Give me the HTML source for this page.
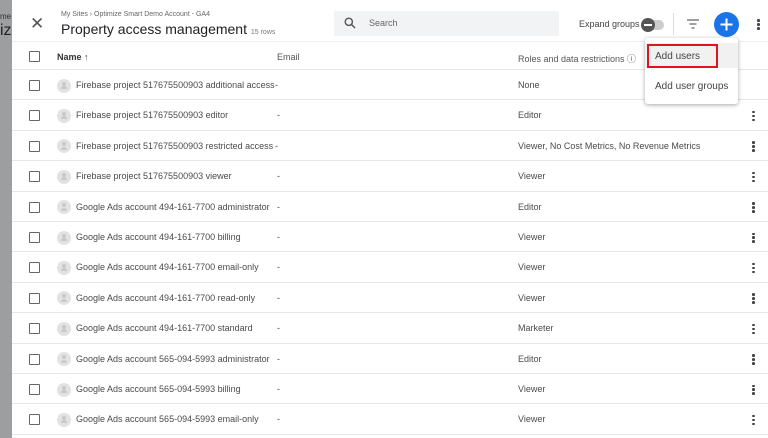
<!DOCTYPE html>
<html><head><style>
*{margin:0;padding:0;box-sizing:border-box}
body{width:768px;height:438px;overflow:hidden;background:#fff;font-family:"Liberation Sans",Arial,sans-serif;position:relative;color:#3c4043}
.strip{position:absolute;left:0;top:0;width:12px;height:438px;background:#9d9ea0}
.ab{position:absolute;white-space:nowrap}
.row{position:absolute;left:12px;width:756px;height:30.4px;border-bottom:1px solid #e6e6e6}
.cb{position:absolute;left:17px;width:11px;height:11px;border:1.6px solid #666;border-radius:1px}
.av{position:absolute;left:45px;width:14px;height:14px;border-radius:50%;background:#e2e2e2}
.av:after{content:"";position:absolute;left:4px;top:7.5px;width:6px;height:3px;border-radius:3px 3px 0 0;background:#c8c8c8}
.av:before{content:"";position:absolute;left:5px;top:3px;width:4px;height:4px;border-radius:50%;background:#c8c8c8}
.t{position:absolute;font-size:9px;color:#4a4a4a;white-space:nowrap}
.dots{position:absolute;left:740px;width:3px}
.dots i{display:block;width:2.6px;height:2.6px;background:#444;border-radius:50%;margin-bottom:1.4px}
</style></head><body>
<div class="strip"></div>
<div class="ab" style="left:0;top:12px;font-size:8px;color:#333">me</div>
<div class="ab" style="left:0;top:22px;font-size:16px;color:#222">iz</div>
<div class="ab" style="left:30px;top:14px;font-size:17px;color:#555">✕</div>
<div class="ab" style="left:61px;top:11px;font-size:7px;color:#666">My Sites › Optimize Smart Demo Account - GA4</div>
<div class="ab" style="left:61px;top:21px;font-size:14px;color:#202124">Property access management <span style="font-size:7px;color:#777">15 rows</span></div>
<div class="ab" style="left:334px;top:11px;width:225px;height:25px;background:#f1f3f4;border-radius:2px"></div>
<svg class="ab" style="left:344px;top:17px" width="12" height="12" viewBox="0 0 12 12"><circle cx="4.8" cy="4.8" r="3.6" fill="none" stroke="#555" stroke-width="1.4"/><path d="M7.5 7.5L11 11" stroke="#555" stroke-width="1.5"/></svg>
<div class="ab" style="left:369px;top:18px;font-size:9px;color:#666">Search</div>
<div class="ab" style="left:579px;top:19px;font-size:9px;color:#444">Expand groups</div>
<div class="ab" style="left:643px;top:20px;width:21px;height:10px;border-radius:5px;background:#ccc"></div>
<div class="ab" style="left:641px;top:18px;width:14px;height:14px;border-radius:50%;background:#555"><div style="position:absolute;left:3px;top:6px;width:8px;height:2px;background:#fff"></div></div>
<div class="ab" style="left:673px;top:13px;width:1px;height:22px;background:#ddd"></div>
<svg class="ab" style="left:687px;top:19px" width="12" height="10"><path d="M0 1h12M2.5 5h7M4.5 9h3" stroke="#666" stroke-width="1.3"/></svg>
<div class="ab" style="left:714px;top:12px;width:25px;height:25px;border-radius:50%;background:#1a73e8"><svg width="25" height="25"><path d="M12.5 6.5v12M6.5 12.5h12" stroke="#fff" stroke-width="2"/></svg></div>
<div class="dots" style="top:19px;left:757px"><i></i><i></i><i></i></div>
<div class="ab" style="left:12px;top:41px;width:756px;height:1px;background:#eee"></div>
<div class="row" style="top:42px;height:28px"></div>
<div class="cb" style="top:51px;left:29px"></div>
<div class="t" style="left:57px;top:52px;font-weight:bold;color:#333">Name ↑</div>
<div class="t" style="left:277px;top:52px;color:#555">Email</div>
<div class="t" style="left:518px;top:52px;color:#555">Roles and data restrictions ⓘ</div>
<div id="rows"></div>
<div class="ab" style="left:645px;top:38px;width:93px;height:66px;background:#fff;box-shadow:0 1px 4px rgba(0,0,0,.35);border-radius:3px">
<div style="position:absolute;left:0;top:5px;width:93px;height:25px;background:#f1f1f1"></div>
<div style="position:absolute;left:2px;top:6px;width:71px;height:24px;border:2px solid #e0141e"></div>
<div style="position:absolute;left:10px;top:13px;font-size:10px;color:#444">Add users</div>
<div style="position:absolute;left:10px;top:43px;font-size:10px;color:#444">Add user groups</div>
</div>
<script>
var d=[["Firebase project 517675500903 additional access","None"],["Firebase project 517675500903 editor","Editor"],["Firebase project 517675500903 restricted access","Viewer, No Cost Metrics, No Revenue Metrics"],["Firebase project 517675500903 viewer","Viewer"],["Google Ads account 494-161-7700 administrator","Editor"],["Google Ads account 494-161-7700 billing","Viewer"],["Google Ads account 494-161-7700 email-only","Viewer"],["Google Ads account 494-161-7700 read-only","Viewer"],["Google Ads account 494-161-7700 standard","Marketer"],["Google Ads account 565-094-5993 administrator","Editor"],["Google Ads account 565-094-5993 billing","Viewer"],["Google Ads account 565-094-5993 email-only","Viewer"]];
var h="";d.forEach(function(r,i){var t=70+i*30.4;var c=t+15.5;
h+='<div class="row" style="top:'+t+'px"></div><div class="cb" style="left:29px;top:'+(c-5.5)+'px"></div><div class="av" style="left:57px;top:'+(c-7)+'px"></div><div class="t" style="left:76px;top:'+(c-5.5)+'px">'+r[0]+'</div><div class="t" style="left:'+(i==0||i==2?275:277)+'px;top:'+(c-5.5)+'px">-</div><div class="t" style="left:518px;top:'+(c-5.5)+'px">'+r[1]+'</div>'+(i>0?'<div class="dots" style="left:752px;top:'+(c-5)+'px"><i></i><i></i><i></i></div>':'');});
document.getElementById("rows").innerHTML=h;
</script>
</body></html>
